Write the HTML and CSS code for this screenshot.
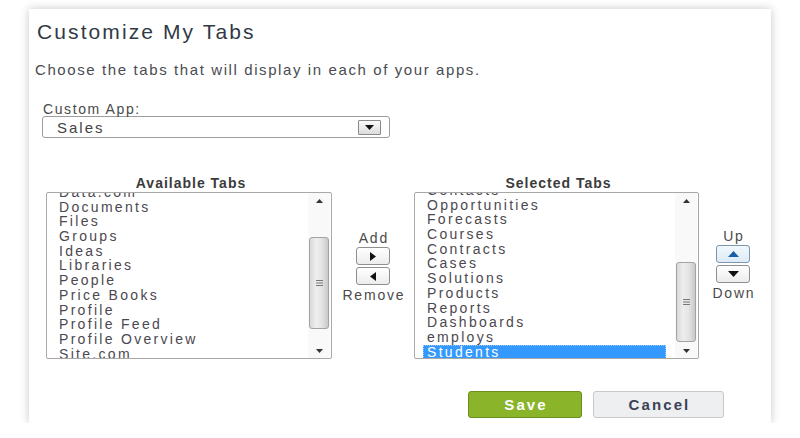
FILE: index.html
```html
<!DOCTYPE html>
<html>
<head>
<meta charset="utf-8">
<link rel="stylesheet" href="styles.css">
</head>
<body>
<div class="card">
  <h1 class="title">Customize My Tabs</h1>
  <p class="intro">Choose the tabs that will display in each of your apps.</p>
  <div class="app-field">
    <div class="field-label">Custom App:</div>
    <div class="select">
      <span class="select-value">Sales</span>
      <span class="dd-btn"><svg width="9" height="5" viewBox="0 0 9 5"><path d="M0 0H9L4.5 5Z" fill="#111"/></svg></span>
    </div>
  </div>

  <div class="pickers">
    <div class="picker">
      <div class="picker-title">Available Tabs</div>
      <div class="listbox">
        <div class="items items-left">
          <div class="item">Data.com</div>
          <div class="item">Documents</div>
          <div class="item">Files</div>
          <div class="item">Groups</div>
          <div class="item">Ideas</div>
          <div class="item">Libraries</div>
          <div class="item">People</div>
          <div class="item">Price Books</div>
          <div class="item">Profile</div>
          <div class="item">Profile Feed</div>
          <div class="item">Profile Overview</div>
          <div class="item">Site.com</div>
        </div>
        <div class="scrollbar">
          <div class="sb-btn"><svg width="7" height="4" viewBox="0 0 7 4"><path d="M0 4L3.5 0L7 4Z" fill="#333"/></svg></div>
          <div class="sb-track">
            <div class="thumb" style="margin-top:29px;height:92px"><svg width="7" height="6" viewBox="0 0 7 6"><path d="M0 .5H7M0 3H7M0 5.5H7" stroke="#777" stroke-width="1"/></svg></div>
          </div>
          <div class="sb-btn"><svg width="7" height="4" viewBox="0 0 7 4"><path d="M0 0L3.5 4L7 0Z" fill="#333"/></svg></div>
        </div>
      </div>
    </div>

    <div class="mover mover-mid">
      <div class="mover-label">Add</div>
      <div class="mini-btn"><svg width="6" height="9" viewBox="0 0 6 9"><path d="M0 0L6 4.5L0 9Z" fill="#111"/></svg></div>
      <div class="mini-btn"><svg width="6" height="9" viewBox="0 0 6 9"><path d="M6 0L0 4.5L6 9Z" fill="#111"/></svg></div>
      <div class="mover-label">Remove</div>
    </div>

    <div class="picker picker-right">
      <div class="picker-title">Selected Tabs</div>
      <div class="listbox">
        <div class="items items-right">
          <div class="item">Contacts</div>
          <div class="item">Opportunities</div>
          <div class="item">Forecasts</div>
          <div class="item">Courses</div>
          <div class="item">Contracts</div>
          <div class="item">Cases</div>
          <div class="item">Solutions</div>
          <div class="item">Products</div>
          <div class="item">Reports</div>
          <div class="item">Dashboards</div>
          <div class="item">employs</div>
          <div class="item selected">Students</div>
        </div>
        <div class="scrollbar">
          <div class="sb-btn"><svg width="7" height="4" viewBox="0 0 7 4"><path d="M0 4L3.5 0L7 4Z" fill="#333"/></svg></div>
          <div class="sb-track">
            <div class="thumb" style="margin-top:54px;height:80px"><svg width="7" height="6" viewBox="0 0 7 6"><path d="M0 .5H7M0 3H7M0 5.5H7" stroke="#777" stroke-width="1"/></svg></div>
          </div>
          <div class="sb-btn"><svg width="7" height="4" viewBox="0 0 7 4"><path d="M0 0L3.5 4L7 0Z" fill="#333"/></svg></div>
        </div>
      </div>
    </div>

    <div class="mover mover-right">
      <div class="mover-label">Up</div>
      <div class="mini-btn mini-active"><svg width="11" height="6" viewBox="0 0 11 6"><path d="M0 6L5.5 0L11 6Z" fill="#1d5ea8"/></svg></div>
      <div class="mini-btn"><svg width="11" height="6" viewBox="0 0 11 6"><path d="M0 0L5.5 6L11 0Z" fill="#111"/></svg></div>
      <div class="mover-label">Down</div>
    </div>
  </div>

  <div class="actions">
    <button class="btn btn-save">Save</button>
    <button class="btn btn-cancel">Cancel</button>
  </div>
</div>
</body>
</html>
```

FILE: styles.css
```css
html, body {
  margin: 0;
  padding: 0;
  background: #ffffff;
}

body {
  font-family: "Liberation Sans", Arial, sans-serif;
  color: #4a4a4a;
}

.card {
  margin: 9px 0 0 29px;
  width: 742px;
  height: 414px;
  background: #ffffff;
  box-shadow: 0 0 9px rgba(0, 0, 0, 0.22);
  box-sizing: border-box;
  overflow: hidden;
}

.title {
  margin: 11px 0 0 8px;
  font-size: 21px;
  line-height: 24px;
  font-weight: normal;
  letter-spacing: 2.1px;
  color: #313a45;
}

.intro {
  margin: 17px 0 0 6px;
  font-size: 15px;
  line-height: 17px;
  letter-spacing: 1.6px;
  color: #4a4c52;
}

.app-field {
  margin: 25px 0 0 13px;
}

.field-label {
  margin-left: 1px;
  font-size: 14px;
  line-height: 13px;
  letter-spacing: 1.6px;
  color: #4a4a4a;
}

.select {
  margin-top: 0;
  width: 348px;
  height: 22px;
  box-sizing: border-box;
  border: 1px solid #9c9c9c;
  border-radius: 3px;
  display: flex;
  align-items: center;
  justify-content: space-between;
  padding: 0 8px 0 14px;
}

.select-value {
  font-size: 15px;
  letter-spacing: 2px;
  color: #444;
}

.dd-btn {
  width: 23px;
  height: 15px;
  box-sizing: border-box;
  border: 1px solid #8a8a8a;
  border-radius: 1px;
  background: linear-gradient(#fbfbfb, #dcdcdc);
  display: flex;
  align-items: center;
  justify-content: center;
}

.pickers {
  margin-top: 37px;
  padding-left: 17px;
  display: flex;
  align-items: flex-start;
}

.picker {
  width: 286px;
}

.picker-right {
  width: 285px;
}

.picker-title {
  font-size: 14px;
  line-height: 16px;
  font-weight: bold;
  letter-spacing: 1px;
  text-align: center;
  color: #3b3b3b;
  margin-bottom: 1px;
  padding-left: 4px;
}

.listbox {
  height: 167px;
  box-sizing: border-box;
  border: 1px solid #a8a8a8;
  border-radius: 2px;
  display: flex;
  overflow: hidden;
  background: #fff;
}

.items {
  flex: 1;
  padding: 0 9px 0 8px;
  font-size: 14px;
  line-height: 14.7px;
  letter-spacing: 2.3px;
  color: #4b4850;
  white-space: nowrap;
  overflow: hidden;
}

.items-left {
  margin-top: -8px;
}

.items-right {
  margin-top: -10px;
}

.item {
  padding-left: 4px;
  height: 14.7px;
  box-sizing: border-box;
}

.item.selected {
  background: #3399ff;
  color: #ffffff;
  outline: 1px dotted #9fc9f5;
  outline-offset: -1px;
}

.scrollbar {
  width: 22px;
  margin-right: 1px;
  display: flex;
  flex-direction: column;
  background: #f9f9f9;
}

.sb-btn {
  height: 15px;
  display: flex;
  align-items: center;
  justify-content: center;
}

.sb-track {
  flex: 1;
  padding: 0 1px;
}

.thumb {
  box-sizing: border-box;
  border: 1px solid #a3a3a3;
  border-radius: 3px;
  background: linear-gradient(to right, #d9d9d9, #eeeeee 35%, #e4e4e4 65%, #c9c9c9);
  display: flex;
  align-items: center;
  justify-content: center;
}

.mover {
  display: flex;
  flex-direction: column;
  align-items: center;
  padding-top: 55px;
}

.mover-mid {
  width: 82px;
}

.mover-right {
  width: 68px;
  padding-top: 53px;
}

.mover-label {
  font-size: 14px;
  line-height: 16px;
  letter-spacing: 1.8px;
  padding-left: 1.8px;
  color: #4a4a4a;
}

.mini-btn {
  width: 34px;
  height: 18px;
  box-sizing: border-box;
  border: 1px solid #8f8f8f;
  border-radius: 3px;
  background: linear-gradient(#ffffff, #ececec);
  display: flex;
  align-items: center;
  justify-content: center;
  margin-top: 1px;
}

.mini-btn + .mini-btn {
  margin-top: 2px;
}

.mini-btn + .mover-label {
  margin-top: 2px;
}

.mini-active {
  border-color: #7f95ad;
  background: linear-gradient(#f2f8fd, #dcebf8);
}

.actions {
  margin-top: 32px;
  padding-right: 47px;
  display: flex;
  justify-content: flex-end;
  gap: 11px;
}

.btn {
  height: 27px;
  box-sizing: border-box;
  border-radius: 3px;
  font-family: "Liberation Sans", Arial, sans-serif;
  font-size: 15px;
  font-weight: bold;
  letter-spacing: 2.1px;
  padding: 0 0 0 2px;
  cursor: pointer;
}

.btn-save {
  width: 114px;
  background: #8ab42a;
  border: 1px solid #6c8e1e;
  color: #ffffff;
}

.btn-cancel {
  width: 131px;
  background: #eeeff1;
  border: 1px solid #c8c8c8;
  color: #3a4456;
}
```
